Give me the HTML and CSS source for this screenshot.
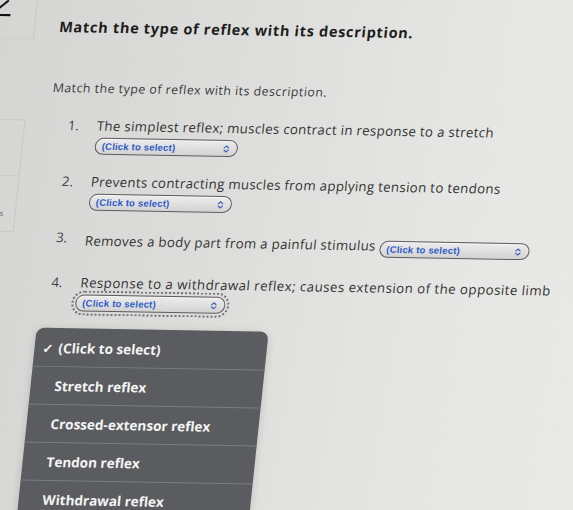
FILE: index.html
```html
<!DOCTYPE html>
<html>
<head>
<meta charset="utf-8">
<link rel="stylesheet" href="styles.css">
</head>
<body>
<div class="page">
  <div class="side">
    <div class="corner">
      <svg class="corner-icon" width="14" height="18" viewBox="0 0 14 18"><path d="M-1 9 L9 0" stroke="#111" stroke-width="2" fill="none"/><path d="M-1 15 L12 15" stroke="#111" stroke-width="2.2" fill="none"/></svg>
    </div>
    <div class="sidebar">
      <div class="cell"></div>
      <div class="cell"><span class="tail">s</span></div>
    </div>
  </div>
  <div class="main">
    <h1 class="title">Match the type of reflex with its description.</h1>
    <p class="intro">Match the type of reflex with its description.</p>
    <ol class="items">
      <li class="item">
        <span class="num">1.</span>
        <div class="body">
          <div class="text">The simplest reflex; muscles contract in response to a stretch</div>
          <div class="select"><span class="sel-label">(Click to select)</span><svg class="arrows" width="7" height="8" viewBox="0 0 7 8"><path d="M1 3.2 L3.5 1 L6 3.2 M1 4.8 L3.5 7 L6 4.8" stroke="#3d63b8" stroke-width="1.2" fill="none"/></svg></div>
        </div>
      </li>
      <li class="item">
        <span class="num">2.</span>
        <div class="body">
          <div class="text">Prevents contracting muscles from applying tension to tendons</div>
          <div class="select"><span class="sel-label">(Click to select)</span><svg class="arrows" width="7" height="8" viewBox="0 0 7 8"><path d="M1 3.2 L3.5 1 L6 3.2 M1 4.8 L3.5 7 L6 4.8" stroke="#3d63b8" stroke-width="1.2" fill="none"/></svg></div>
        </div>
      </li>
      <li class="item">
        <span class="num">3.</span>
        <div class="body">
          <div class="text inline">Removes a body part from a painful stimulus <div class="select wide"><span class="sel-label">(Click to select)</span><svg class="arrows" width="7" height="8" viewBox="0 0 7 8"><path d="M1 3.2 L3.5 1 L6 3.2 M1 4.8 L3.5 7 L6 4.8" stroke="#3d63b8" stroke-width="1.2" fill="none"/></svg></div></div>
        </div>
      </li>
      <li class="item last">
        <span class="num">4.</span>
        <div class="body">
          <div class="text">Response to a withdrawal reflex; causes extension of the opposite limb</div>
          <div class="select focus"><span class="sel-label">(Click to select)</span><svg class="arrows" width="7" height="8" viewBox="0 0 7 8"><path d="M1 3.2 L3.5 1 L6 3.2 M1 4.8 L3.5 7 L6 4.8" stroke="#3d63b8" stroke-width="1.2" fill="none"/></svg></div>
        </div>
        <ul class="menu">
          <li class="opt checked"><span class="check">✓</span>(Click to select)</li>
          <li class="opt">Stretch reflex</li>
          <li class="opt">Crossed-extensor reflex</li>
          <li class="opt">Tendon reflex</li>
          <li class="opt">Withdrawal reflex</li>
        </ul>
      </li>
    </ol>
  </div>
</div>
</body>
</html>
```

FILE: styles.css
```css
html, body {
  margin: 0;
  padding: 0;
  height: 100%;
  overflow: hidden;
}
body {
  background: linear-gradient(100deg, #d5d5d3 0%, #dddedb 40%, #e6e7e4 75%, #e9eae7 100%);
  font-family: "Open Sans", Lato, sans-serif;
  color: #2e2e2e;
}
.page {
  display: grid;
  grid-template-columns: 38px 1fr;
  transform-origin: 0 0;
  transform: rotate(1deg) skewX(-5deg);
  width: 640px;
}
.side {
  display: flex;
  flex-direction: column;
}
.corner {
  height: 38px;
  margin-left: -20px;
  border-right: 1px solid #c9c9c7;
  border-bottom: 1px solid #cfcfcd;
  position: relative;
}
.corner-icon {
  position: absolute;
  left: 20px;
  top: 0;
}
.sidebar {
  margin-top: 80px;
  margin-left: -20px;
  border: 1px solid #c8c8c6;
  border-left: none;
  display: flex;
  flex-direction: column;
}
.cell {
  height: 55px;
}
.cell + .cell {
  border-top: 1px solid #cbcbc9;
  position: relative;
}
.tail {
  position: absolute;
  left: 42px;
  top: 31px;
  font-size: 8px;
  color: #666;
}
.main {
  padding-left: 24px;
}
.title {
  margin: 16px 0 0;
  font-size: 14.5px;
  line-height: 20px;
  font-weight: 700;
  color: #1e1e1e;
  letter-spacing: 0.7px;
}
.intro {
  margin: 43px 0 0;
  font-size: 12.3px;
  line-height: 16px;
  color: #3a3a3a;
  letter-spacing: 0.5px;
}
.items {
  list-style: none;
  margin: 21px 0 0;
  padding: 0 0 0 19px;
  display: flex;
  flex-direction: column;
  gap: 19px;
}
.item {
  display: flex;
  font-size: 13.3px;
  line-height: 17px;
  color: #333;
  letter-spacing: 0.3px;
}
.item.last {
  position: relative;
  margin-top: 3px;
  letter-spacing: 0.45px;
}
.num {
  width: 29px;
  flex: none;
  color: #444;
  letter-spacing: 0;
}
.body {
  display: flex;
  flex-direction: column;
  gap: 3px;
  align-items: flex-start;
}
.text.inline {
  display: flex;
  align-items: center;
  gap: 4px;
  white-space: nowrap;
}
.select {
  box-sizing: border-box;
  width: 143px;
  height: 17px;
  border: 1.5px solid #5d5d5d;
  border-radius: 9px;
  background: linear-gradient(#ececec, #d3d3d3);
  display: flex;
  align-items: center;
  justify-content: space-between;
  padding: 0 7px 0 6px;
  box-shadow: inset 0 1px 0 rgba(255,255,255,0.6);
  letter-spacing: 0.2px;
}
.select.wide {
  width: 150px;
  margin-top: 6px;
}
.select.focus {
  outline: 2px dotted #6f737a;
  outline-offset: 2px;
  margin-left: -3px;
  width: 150px;
}
.sel-label {
  font-family: "Liberation Sans", Arial, sans-serif;
  font-weight: 700;
  font-size: 9.5px;
  color: #2c5bc6;
}
.arrows {
  display: block;
}
.menu {
  position: absolute;
  left: -10px;
  top: 54px;
  width: 232px;
  margin: 0;
  padding: 0;
  list-style: none;
  background: #5a5c5f;
  border-radius: 8px 8px 0 0;
  box-shadow: 0 2px 8px rgba(0,0,0,0.15);
  letter-spacing: 0;
}
.opt {
  position: relative;
  height: 38px;
  display: flex;
  align-items: center;
  padding-left: 24px;
  padding-top: 2px;
  font-family: "Open Sans", Lato, sans-serif;
  font-weight: 700;
  font-size: 13.5px;
  color: #f4f4f4;
  border-top: 1px solid #7b7d80;
  box-sizing: border-box;
}
.opt.checked {
  border-top: none;
}
.check {
  position: absolute;
  left: 8px;
  font-size: 13px;
}
```
